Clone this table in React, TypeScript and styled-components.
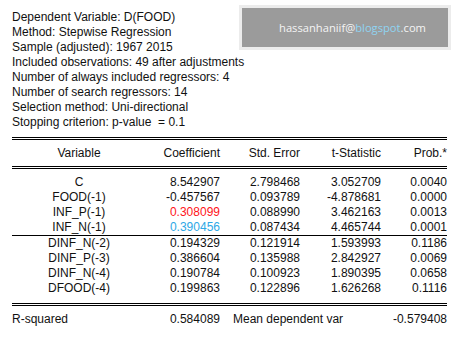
import React from "react";
import styled, { createGlobalStyle } from "styled-components";

const Global = createGlobalStyle`
  html, body { margin: 0; padding: 0; background: #ffffff; }
  body { font-family: "Liberation Sans", Arial, sans-serif; color: #111111; }
`;

const Page = styled.div`
  position: relative;
  width: 465px;
  height: 339px;
  padding: 10px 0 0 12px;
  box-sizing: border-box;
  font-size: 12px;
`;

const Watermark = styled.div`
  position: absolute;
  left: 239px;
  top: 5px;
  width: 212px;
  height: 45px;
  box-sizing: border-box;
  border: 3px solid #ececec;
  background: #9b9b9b;
  display: flex;
  align-items: center;
  justify-content: center;
  font-family: "Open Sans", "Noto Sans", sans-serif;
  font-size: 11.2px;
  color: #f4f4f4;
  padding-left: 15px;
`;

const Blue = styled.span`
  color: #8fd4f2;
`;

const Info = styled.div`
  display: flex;
  flex-direction: column;
`;

const InfoLine = styled.div`
  line-height: 15px;
  height: 15px;
  white-space: pre;
`;

const Table = styled.div`
  width: 435px;
  margin-top: 7px;
`;

const DoubleRule = styled.div`
  height: 1px;
  border-top: 1px solid #000;
  border-bottom: 1px solid #000;
`;

const SingleRule = styled.div`
  height: 0;
  border-top: 1px solid #000;
`;

const Grid = styled.div<{ $h: number }>`
  display: grid;
  grid-template-columns: 134px 74px 80px 81px 66px;
  grid-auto-rows: ${(p) => p.$h}px;
  align-items: center;
  line-height: 15px;
`;

const Body = styled.div<{ $top?: number; $bottom?: number }>`
  padding-top: ${(p) => p.$top ?? 0}px;
  padding-bottom: ${(p) => p.$bottom ?? 0}px;
`;

const Cell = styled.div<{ $align?: "left" | "center" | "right"; $color?: string }>`
  text-align: ${(p) => p.$align ?? "right"};
  color: ${(p) => p.$color ?? "#111111"};
  white-space: pre;
`;

const Footer = styled.div`
  display: grid;
  grid-template-columns: 208px 13px 214px;
  height: 26px;
  align-items: center;
`;

const FootPair = styled.div`
  display: flex;
  justify-content: space-between;
`;

const info = [
  "Dependent Variable: D(FOOD)",
  "Method: Stepwise Regression",
  "Sample (adjusted): 1967 2015",
  "Included observations: 49 after adjustments",
  "Number of always included regressors: 4",
  "Number of search regressors: 14",
  "Selection method: Uni-directional",
  "Stopping criterion: p-value  = 0.1",
];

type Row = [string, string, string, string, string, string?];

const fixed: Row[] = [
  ["C", "8.542907", "2.798468", "3.052709", "0.0040"],
  ["FOOD(-1)", "-0.457567", "0.093789", "-4.878681", "0.0000"],
  ["INF_P(-1)", "0.308099", "0.088990", "3.462163", "0.0013", "#ff1420"],
  ["INF_N(-1)", "0.390456", "0.087434", "4.465744", "0.0001", "#2ea8e6"],
];

const search: Row[] = [
  ["DINF_N(-2)", "0.194329", "0.121914", "1.593993", "0.1186"],
  ["DINF_P(-3)", "0.386604", "0.135988", "2.842927", "0.0069"],
  ["DINF_N(-4)", "0.190784", "0.100923", "1.890395", "0.0658"],
  ["DFOOD(-4)", "0.199863", "0.122896", "1.626268", "0.1116"],
];

const renderRows = (rows: Row[]) =>
  rows.map((r) => (
    <React.Fragment key={r[0]}>
      <Cell $align="center">{r[0]}</Cell>
      <Cell $color={r[5]}>{r[1]}</Cell>
      <Cell>{r[2]}</Cell>
      <Cell>{r[3]}</Cell>
      <Cell>{r[4]}</Cell>
    </React.Fragment>
  ));

export default function App() {
  return (
    <>
      <Global />
      <Page>
        <Info>
          {info.map((l) => (
            <InfoLine key={l}>{l}</InfoLine>
          ))}
        </Info>
        <Table>
          <DoubleRule />
          <Grid $h={26}>
            <Cell $align="center">Variable</Cell>
            <Cell>Coefficient</Cell>
            <Cell>Std. Error</Cell>
            <Cell>t-Statistic</Cell>
            <Cell>Prob.*</Cell>
          </Grid>
          <DoubleRule />
          <Body $top={6}>
            <Grid $h={15}>{renderRows(fixed)}</Grid>
          </Body>
          <SingleRule />
          <Body $bottom={7}>
            <Grid $h={15}>{renderRows(search)}</Grid>
          </Body>
          <DoubleRule />
          <Footer>
            <FootPair>
              <span>R-squared</span>
              <span>0.584089</span>
            </FootPair>
            <span />
            <FootPair>
              <span>Mean dependent var</span>
              <span>-0.579408</span>
            </FootPair>
          </Footer>
        </Table>
        <Watermark>
          <span>
            hassanhaniif@<Blue>blogspot</Blue>.com
          </span>
        </Watermark>
      </Page>
    </>
  );
}
